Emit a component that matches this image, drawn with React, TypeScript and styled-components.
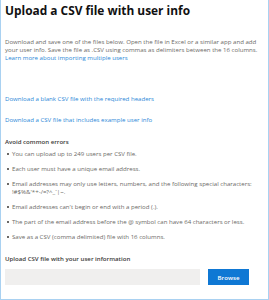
import React from 'react';
import styled, { createGlobalStyle } from 'styled-components';

const GlobalStyle = createGlobalStyle`
  html, body {
    margin: 0;
    padding: 0;
    background: #ffffff;
  }
  * {
    box-sizing: border-box;
  }
`;

const Panel = styled.section`
  width: 269px;
  height: 300px;
  padding: 0 4px 0 4px;
  border-left: 1px solid #a9d1f1;
  border-right: 1px solid #a9d1f1;
  border-bottom: 1px solid #a9d1f1;
  font-family: 'Open Sans', 'Noto Sans', sans-serif;
  font-size: 6.1px;
  line-height: 8px;
  color: #6b6966;
  overflow: hidden;
`;

const Title = styled.h1`
  margin: 0;
  padding-top: 2px;
  font-size: 11.9px;
  line-height: 16px;
  font-weight: 700;
  color: #111111;
`;

const Intro = styled.p`
  margin: 20px 0 0;
`;

const Link = styled.a<{ $gap: number }>`
  display: block;
  margin-top: ${({ $gap }) => $gap}px;
  color: #2b88d8;
  text-decoration: none;
`;

const Heading = styled.h2`
  margin: 14px 0 0;
  font-size: 6.1px;
  line-height: 8px;
  font-weight: 600;
  color: #3b3a39;
`;

const Errors = styled.ul`
  list-style: none;
  margin: 4px 0 0;
  padding: 0;
`;

const ErrorItem = styled.li`
  position: relative;
  padding-left: 7px;
  margin-bottom: 7px;

  &::before {
    content: '';
    position: absolute;
    left: 2px;
    top: 3px;
    width: 2px;
    height: 2px;
    background: #6b6966;
  }
`;

const UploadLabel = styled.div`
  margin-top: 14px;
  font-weight: 600;
  color: #3b3a39;
`;

const UploadRow = styled.div`
  display: flex;
  align-items: center;
  gap: 8px;
  margin-top: 6px;
`;

const FileBox = styled.div`
  width: 195px;
  height: 16px;
  background: #f0efee;
`;

const BrowseButton = styled.button`
  width: 41px;
  height: 16px;
  padding: 0;
  border: none;
  background: #0f78d4;
  color: #ffffff;
  font-family: inherit;
  font-size: 6.1px;
  font-weight: 600;
`;

const errors = [
  'You can upload up to 249 users per CSV file.',
  'Each user must have a unique email address.',
  "Email addresses may only use letters, numbers, and the following special characters: !#$%&'*+-/=?^_`|~.",
  "Email addresses can't begin or end with a period (.).",
  'The part of the email address before the @ symbol can have 64 characters or less.',
  'Save as a CSV (comma delimited) file with 16 columns.',
];

const App: React.FC = () => (
  <>
    <GlobalStyle />
    <Panel>
      <Title>Upload a CSV file with user info</Title>
      <Intro>
        Download and save one of the files below. Open the file in Excel or a similar app and add
        your user info. Save the file as .CSV using commas as delimiters between the 16 columns.
        <Link $gap={0} href="#">Learn more about importing multiple users</Link>
      </Intro>
      <Link $gap={33} href="#">Download a blank CSV file with the required headers</Link>
      <Link $gap={13} href="#">Download a CSV file that includes example user info</Link>
      <Heading>Avoid common errors</Heading>
      <Errors>
        {errors.map((text, idx) => (
          <ErrorItem key={idx}>{text}</ErrorItem>
        ))}
      </Errors>
      <UploadLabel>Upload CSV file with your user information</UploadLabel>
      <UploadRow>
        <FileBox />
        <BrowseButton>Browse</BrowseButton>
      </UploadRow>
    </Panel>
  </>
);

export default App;
